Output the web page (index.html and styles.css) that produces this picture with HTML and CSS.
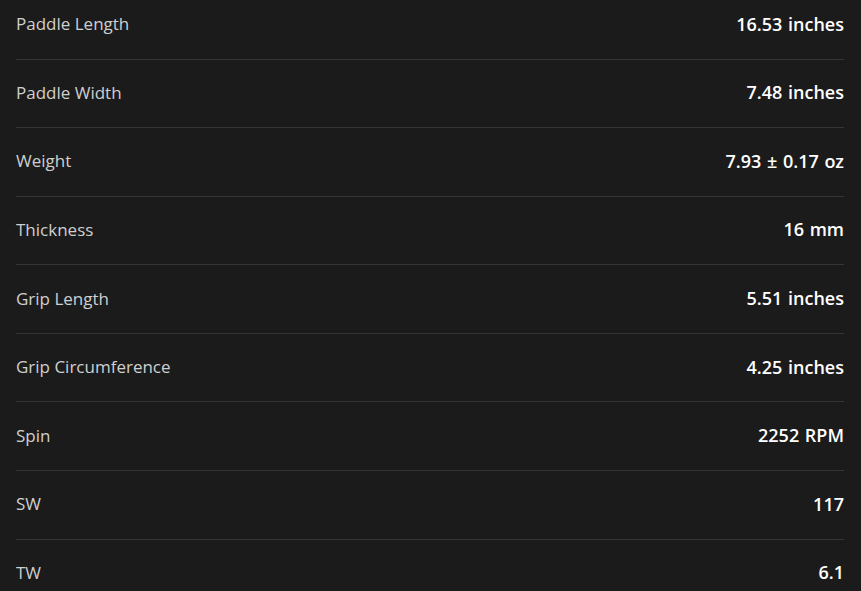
FILE: index.html
```html
<!DOCTYPE html>
<html lang="en">
<head>
<meta charset="utf-8">
<link rel="stylesheet" href="styles.css">
</head>
<body>
<div class="specs">
  <div class="row"><span class="label">Paddle Length</span><span class="value">16.53 inches</span></div>
  <div class="row"><span class="label">Paddle Width</span><span class="value">7.48 inches</span></div>
  <div class="row"><span class="label">Weight</span><span class="value">7.93 ± 0.17 oz</span></div>
  <div class="row"><span class="label">Thickness</span><span class="value">16 mm</span></div>
  <div class="row"><span class="label">Grip Length</span><span class="value">5.51 inches</span></div>
  <div class="row"><span class="label">Grip Circumference</span><span class="value">4.25 inches</span></div>
  <div class="row"><span class="label">Spin</span><span class="value">2252 RPM</span></div>
  <div class="row"><span class="label">SW</span><span class="value">117</span></div>
  <div class="row"><span class="label">TW</span><span class="value">6.1</span></div>
</div>
</body>
</html>
```

FILE: styles.css
```css
html, body {
  margin: 0;
  padding: 0;
  background: #1b1b1b;
  overflow: hidden;
}
.specs {
  margin-top: -9px;
  padding: 0 17px 0 16px;
  font-family: "Open Sans", "Noto Sans", sans-serif;
}
.row {
  height: 65.57px;
  border-bottom: 1px solid #353535;
  display: flex;
  align-items: center;
  justify-content: space-between;
  padding-bottom: 2px;
  box-sizing: content-box;
}
.label {
  color: #cfcfcf;
  font-size: 17px;
}
.value {
  color: #ffffff;
  font-size: 18px;
  font-weight: 600;
  word-spacing: 1px;
}
```
